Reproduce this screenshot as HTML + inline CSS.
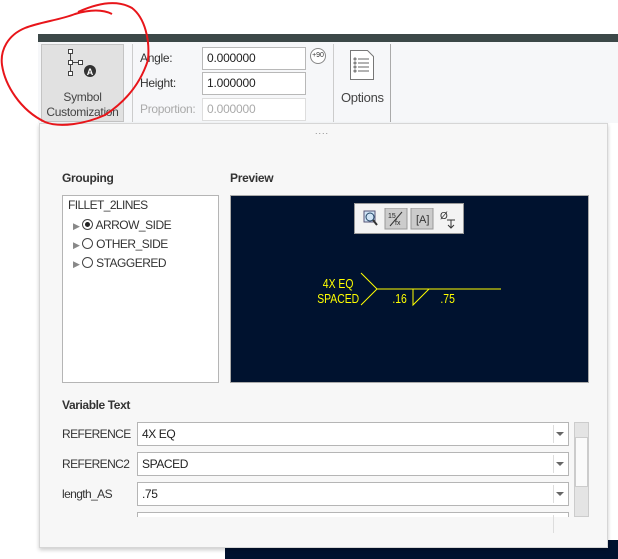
<!DOCTYPE html>
<html><head><style>
body{margin:0;width:618px;height:559px;position:relative;overflow:hidden;background:#fff;font-family:"Liberation Sans",sans-serif;}
.abs{position:absolute}
.t{font-size:12px;color:#333;letter-spacing:-0.3px}
.fld{position:absolute;background:#fff;border:1px solid #b8b8b8;height:20px;font-size:12px;line-height:20px;padding-left:4px;color:#222;box-sizing:border-box;letter-spacing:-0.2px}
.combo{position:absolute;left:137px;width:432px;height:24px;background:#fff;border:1px solid #b5b5b5;box-sizing:border-box;font-size:12px;line-height:22px;padding-left:4px;color:#222;letter-spacing:-0.4px}
.combo:after{content:"";position:absolute;right:0;top:2px;width:14px;height:18px;border-left:1px solid #ddd;}
.arr{position:absolute;right:4px;top:9px;width:0;height:0;border-left:4px solid transparent;border-right:4px solid transparent;border-top:4px solid #666}
.lbl{position:absolute;left:62px;font-size:12px;color:#333;letter-spacing:-0.6px}
</style></head><body>
<div class="abs" style="left:38px;top:34px;width:580px;height:8px;background:#3c4848"></div>
<div class="abs" style="left:38px;top:42px;width:580px;height:81px;background:#f6f7f9"></div>
<div class="abs" style="left:41px;top:44px;width:83px;height:78px;background:#e1e1e1;border:1px solid #c4c4c4;box-sizing:border-box"></div>
<svg class="abs" style="left:60px;top:46px" width="45" height="36">
<g fill="#fff" stroke="#444" stroke-width="1"><rect x="8.5" y="3.5" width="4" height="4"/><rect x="8.5" y="14.5" width="4" height="4"/><rect x="8.5" y="25.5" width="4" height="4"/><rect x="18.5" y="14.5" width="4" height="4"/></g>
<path d="M10.5 7.5v7M10.5 18.5v7M12.5 16.5h6" stroke="#444"/>
<circle cx="30" cy="25" r="6" fill="#333"/><text x="30" y="29" font-size="9" fill="#fff" text-anchor="middle" font-weight="bold">A</text>
</svg>
<div class="abs t" style="left:41px;top:90px;width:83px;text-align:center;font-size:12px;line-height:15px;color:#444">Symbol<br>Customization</div>
<div class="abs" style="left:132px;top:44px;width:1px;height:78px;background:#ccc"></div>
<div class="abs t" style="left:140px;top:51px">Angle:</div>
<div class="abs t" style="left:140px;top:76px">Height:</div>
<div class="abs t" style="left:140px;top:102px;color:#aaa">Proportion:</div>
<div class="fld" style="left:202px;top:47px;width:104px;height:23px;line-height:21px">0.000000</div>
<div class="fld" style="left:202px;top:72px;width:104px;height:23px;line-height:21px">1.000000</div>
<div class="fld" style="left:202px;top:98px;width:104px;height:23px;line-height:21px;color:#aaa;border-color:#ddd">0.000000</div>
<div class="abs" style="left:310px;top:48px;width:14px;height:14px;border:1px solid #888;border-radius:50%;font-size:7px;line-height:14px;text-align:center;color:#333;background:#fff">+90</div>
<div class="abs" style="left:333px;top:44px;width:1px;height:78px;background:#ccc"></div>
<svg class="abs" style="left:348px;top:49px" width="28" height="32"><path d="M2.5 1.5h17l6 6v23h-23z" fill="#fff" stroke="#777"/><g stroke="#666"><path d="M10 10h11M10 14h11M10 18h11M10 22h11"/><circle cx="7" cy="10" r="1" fill="none"/><circle cx="7" cy="14" r="1" fill="none"/><circle cx="7" cy="18" r="1" fill="none"/><circle cx="7" cy="22" r="1" fill="none"/></g></svg>
<div class="abs t" style="left:341px;top:90px;font-size:13px;color:#444">Options</div>
<div class="abs" style="left:390px;top:44px;width:1px;height:78px;background:#aaa"></div>
<div class="abs" style="left:225px;top:540px;width:393px;height:19px;background:#00112e"></div>
<div class="abs" style="left:39px;top:123px;width:569px;height:425px;background:#f7f7f7;border:1px solid #d6d6d6;box-sizing:border-box;box-shadow:0 2px 4px rgba(0,0,0,.2)"></div>
<div class="abs" style="left:315px;top:126px;font-size:9px;color:#888;letter-spacing:1px">....</div>
<div class="abs" style="left:62px;top:171px;font-size:12px;font-weight:bold;color:#333;letter-spacing:-0.3px">Grouping</div>
<div class="abs" style="left:230px;top:171px;font-size:12px;font-weight:bold;color:#333;letter-spacing:-0.3px">Preview</div>
<div class="abs" style="left:62px;top:195px;width:157px;height:188px;background:#fff;border:1px solid #b5b5b5;box-sizing:border-box"></div>
<div class="abs t" style="left:68px;top:198px;letter-spacing:-0.6px">FILLET_2LINES</div>
<div class="abs" style="left:73px;top:216px;font-size:12px;color:#333;line-height:18px;letter-spacing:-0.5px">
<div><span style="color:#888;font-size:9px">▶</span> <span style="display:inline-block;width:9px;height:9px;border:1px solid #444;border-radius:50%;vertical-align:-1px;position:relative"><span style="position:absolute;left:2px;top:2px;width:5px;height:5px;border-radius:50%;background:#222"></span></span> ARROW_SIDE</div>
<div><span style="color:#888;font-size:9px">▶</span> <span style="display:inline-block;width:9px;height:9px;border:1px solid #444;border-radius:50%;vertical-align:-1px"></span> OTHER_SIDE</div>
<div><span style="color:#888;font-size:9px">▶</span> <span style="display:inline-block;width:9px;height:9px;border:1px solid #444;border-radius:50%;vertical-align:-1px"></span> STAGGERED</div>
</div>
<div class="abs" style="left:230px;top:195px;width:359px;height:188px;background:#00122f;border:1px solid #aaa;box-sizing:border-box"></div>
<div class="abs" style="left:354px;top:203px;width:110px;height:31px;background:#f3f3f3;border:1px solid #999;box-sizing:border-box"></div>
<svg class="abs" style="left:360px;top:208px" width="100" height="22">
<rect x="4" y="3" width="11" height="11" fill="#cfe3f5" stroke="#557"/><circle cx="10" cy="9" r="4" fill="none" stroke="#246"/><path d="M13 12l4 5" stroke="#333" stroke-width="2"/>
<rect x="25" y="0" width="22" height="21" fill="#ccc" stroke="#999"/><text x="28" y="10" font-size="7" fill="#222">15</text><path d="M30 18l12-14" stroke="#333"/><text x="35" y="17" font-size="7" fill="#222">fx</text>
<rect x="51" y="0" width="22" height="21" fill="#ccc" stroke="#999"/><text x="56" y="15" font-size="11" fill="#333">[A]</text>
<text x="80" y="11" font-size="10" fill="#333">Ø</text><path d="M87 12h8M91 12v8M88 17l3 3 3-3" stroke="#333" fill="none"/>
</svg>
<svg class="abs" style="left:230px;top:195px" width="359" height="188">
<g fill="#ff0" font-family="Liberation Sans Narrow,Liberation Sans,sans-serif" font-size="13" transform="scale(0.8,1)"><text x="116" y="93">4X EQ</text><text x="109" y="108">SPACED</text><text x="203" y="108">.16</text><text x="263" y="108">.75</text></g>
<path d="M131 78l16 16-16 16M147 94h124M183 94v16l16-16" stroke="#ff0" fill="none"/>
</svg>
<div class="abs" style="left:62px;top:398px;font-size:12px;font-weight:bold;color:#333;letter-spacing:-0.4px">Variable Text</div>
<div class="lbl" style="top:427px">REFERENCE</div>
<div class="lbl" style="top:457px">REFERENC2</div>
<div class="lbl" style="top:487px">length_AS</div>
<div class="combo" style="top:422px">4X EQ<span class="arr"></span></div>
<div class="combo" style="top:452px">SPACED<span class="arr"></span></div>
<div class="combo" style="top:482px">.75<span class="arr"></span></div>
<div class="combo" style="top:512px;height:5px;border-bottom:none"></div>
<div class="abs" style="left:574px;top:422px;width:15px;height:95px;background:#e4e4e4;border:1px solid #ccc;box-sizing:border-box"></div>
<div class="abs" style="left:575px;top:437px;width:13px;height:50px;background:#fafafa;border:1px solid #ccc;box-sizing:border-box"></div>
<svg class="abs" style="left:0;top:0" width="160" height="140"><path d="M112 14C100 8 85 11 75 14 60 20 40 22 25 28 8 35 0 50 2 65 5 85 20 110 45 122 60 128 85 124 105 115 125 102 140 85 148 60 150 40 145 18 132 8 118 0 100 2 78 12" fill="none" stroke="#e8151a" stroke-width="2"/></svg>
</body></html>
